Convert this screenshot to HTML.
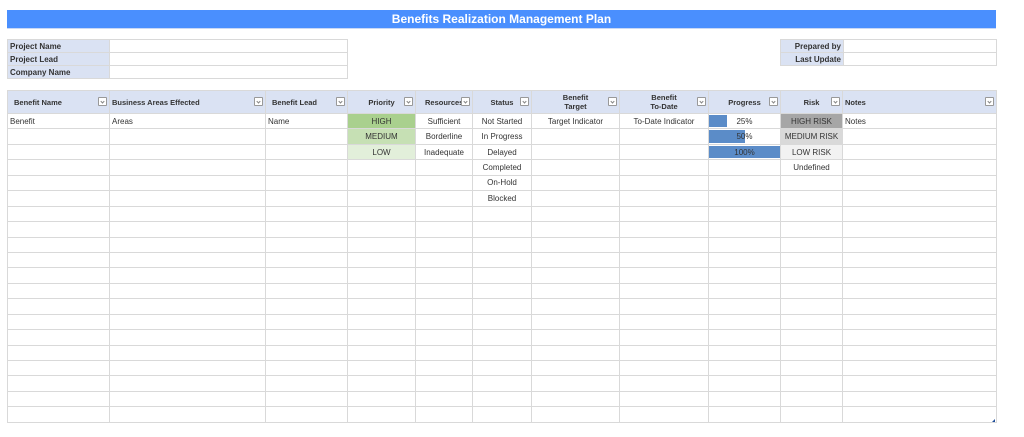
<!DOCTYPE html>
<html><head><style>
body{margin:0;width:1024px;height:437px;background:#fff;font-family:"Liberation Sans",sans-serif;position:relative;overflow:hidden;color:#333}
.title{position:absolute;left:7px;top:10px;width:989px;height:18px;background:#4a8ffe;color:#fff;font-weight:bold;font-size:12px;text-align:center;line-height:18px;border-bottom:1px solid #c9d8f5}
table{border-collapse:collapse;position:absolute;table-layout:fixed}
td{border:1px solid #d9d9d9;padding:0 2px;font-size:8px;white-space:nowrap;overflow:hidden;position:relative}
.lbl{background:#dae2f3;font-weight:bold;color:#333}
.h td{background:#dae2f3;font-weight:bold;font-size:7.5px;text-align:center;height:22px;line-height:9px}
.dd{position:absolute;right:2px;top:6px;width:7px;height:7px;border:1px solid #999;background:#fff;border-radius:1px}
.dd:after{content:"";position:absolute;left:2px;top:2px;width:2px;height:2px;border-right:1px solid #888;border-bottom:1px solid #888;transform:rotate(45deg)}
.d td{height:14.45px;line-height:13px;padding-top:0;padding-bottom:0}
.c{text-align:center}
.bar{position:absolute;left:0;top:1px;bottom:1px;background:#5b8cc8}
.pt{position:relative}
</style></head><body>
<div class="title">Benefits Realization Management Plan</div>
<table style="left:7px;top:39px;width:341px">
<col style="width:102px"><col>
<tr><td class="lbl" style="height:12px">Project Name</td><td></td></tr>
<tr><td class="lbl" style="height:12px">Project Lead</td><td></td></tr>
<tr><td class="lbl" style="height:12px">Company Name</td><td></td></tr>
</table>
<table style="left:780px;top:39px;width:217px">
<col style="width:63px"><col>
<tr><td class="lbl" style="height:12px;text-align:right">Prepared by</td><td></td></tr>
<tr><td class="lbl" style="height:12px;text-align:right">Last Update</td><td></td></tr>
</table>
<table style="left:7px;top:90px;width:990px">
<col style="width:102px"><col style="width:156px"><col style="width:82px"><col style="width:68px"><col style="width:57px"><col style="width:59px"><col style="width:88px"><col style="width:89px"><col style="width:72px"><col style="width:62px"><col>
<tr class="h">
<td style="text-align:left;padding-left:6px">Benefit Name<span class="dd"></span></td>
<td style="text-align:left">Business Areas Effected<span class="dd"></span></td>
<td style="text-align:left;padding-left:6px">Benefit Lead<span class="dd"></span></td>
<td>Priority<span class="dd"></span></td>
<td style="text-align:left;padding-left:9px">Resources<span class="dd"></span></td>
<td>Status<span class="dd"></span></td>
<td>Benefit<br>Target<span class="dd"></span></td>
<td>Benefit<br>To-Date<span class="dd"></span></td>
<td>Progress<span class="dd"></span></td>
<td>Risk<span class="dd"></span></td>
<td style="text-align:left">Notes<span class="dd"></span></td>
</tr>
<tr class="d"><td>Benefit</td><td>Areas</td><td>Name</td><td class="c" style="background:#a9d08e">HIGH</td><td class="c">Sufficient</td><td class="c">Not Started</td><td class="c">Target Indicator</td><td class="c">To-Date Indicator</td><td class="c"><div class="bar" style="width:25%"></div><span class="pt">25%</span></td><td class="c" style="background:#a6a6a6">HIGH RISK</td><td>Notes</td></tr>
<tr class="d"><td></td><td></td><td></td><td class="c" style="background:#c6e0b4">MEDIUM</td><td class="c">Borderline</td><td class="c">In Progress</td><td></td><td></td><td class="c"><div class="bar" style="width:50%"></div><span class="pt">50%</span></td><td class="c" style="background:#d9d9d9">MEDIUM RISK</td><td></td></tr>
<tr class="d"><td></td><td></td><td></td><td class="c" style="background:#e2efda">LOW</td><td class="c">Inadequate</td><td class="c">Delayed</td><td></td><td></td><td class="c"><div class="bar" style="width:100%"></div><span class="pt">100%</span></td><td class="c" style="background:#f2f2f2">LOW RISK</td><td></td></tr>
<tr class="d"><td></td><td></td><td></td><td></td><td></td><td class="c">Completed</td><td></td><td></td><td></td><td class="c">Undefined</td><td></td></tr>
<tr class="d"><td></td><td></td><td></td><td></td><td></td><td class="c">On-Hold</td><td></td><td></td><td></td><td></td><td></td></tr>
<tr class="d"><td></td><td></td><td></td><td></td><td></td><td class="c">Blocked</td><td></td><td></td><td></td><td></td><td></td></tr>
<tr class="d"><td></td><td></td><td></td><td></td><td></td><td></td><td></td><td></td><td></td><td></td><td></td></tr>
<tr class="d"><td></td><td></td><td></td><td></td><td></td><td></td><td></td><td></td><td></td><td></td><td></td></tr>
<tr class="d"><td></td><td></td><td></td><td></td><td></td><td></td><td></td><td></td><td></td><td></td><td></td></tr>
<tr class="d"><td></td><td></td><td></td><td></td><td></td><td></td><td></td><td></td><td></td><td></td><td></td></tr>
<tr class="d"><td></td><td></td><td></td><td></td><td></td><td></td><td></td><td></td><td></td><td></td><td></td></tr>
<tr class="d"><td></td><td></td><td></td><td></td><td></td><td></td><td></td><td></td><td></td><td></td><td></td></tr>
<tr class="d"><td></td><td></td><td></td><td></td><td></td><td></td><td></td><td></td><td></td><td></td><td></td></tr>
<tr class="d"><td></td><td></td><td></td><td></td><td></td><td></td><td></td><td></td><td></td><td></td><td></td></tr>
<tr class="d"><td></td><td></td><td></td><td></td><td></td><td></td><td></td><td></td><td></td><td></td><td></td></tr>
<tr class="d"><td></td><td></td><td></td><td></td><td></td><td></td><td></td><td></td><td></td><td></td><td></td></tr>
<tr class="d"><td></td><td></td><td></td><td></td><td></td><td></td><td></td><td></td><td></td><td></td><td></td></tr>
<tr class="d"><td></td><td></td><td></td><td></td><td></td><td></td><td></td><td></td><td></td><td></td><td></td></tr>
<tr class="d"><td></td><td></td><td></td><td></td><td></td><td></td><td></td><td></td><td></td><td></td><td></td></tr>
<tr class="d"><td></td><td></td><td></td><td></td><td></td><td></td><td></td><td></td><td></td><td></td><td></td></tr>
</table>
<div style="position:absolute;left:992px;top:419px;width:0;height:0;border-left:3px solid transparent;border-bottom:3px solid #1f4e9a"></div>
</body></html>
